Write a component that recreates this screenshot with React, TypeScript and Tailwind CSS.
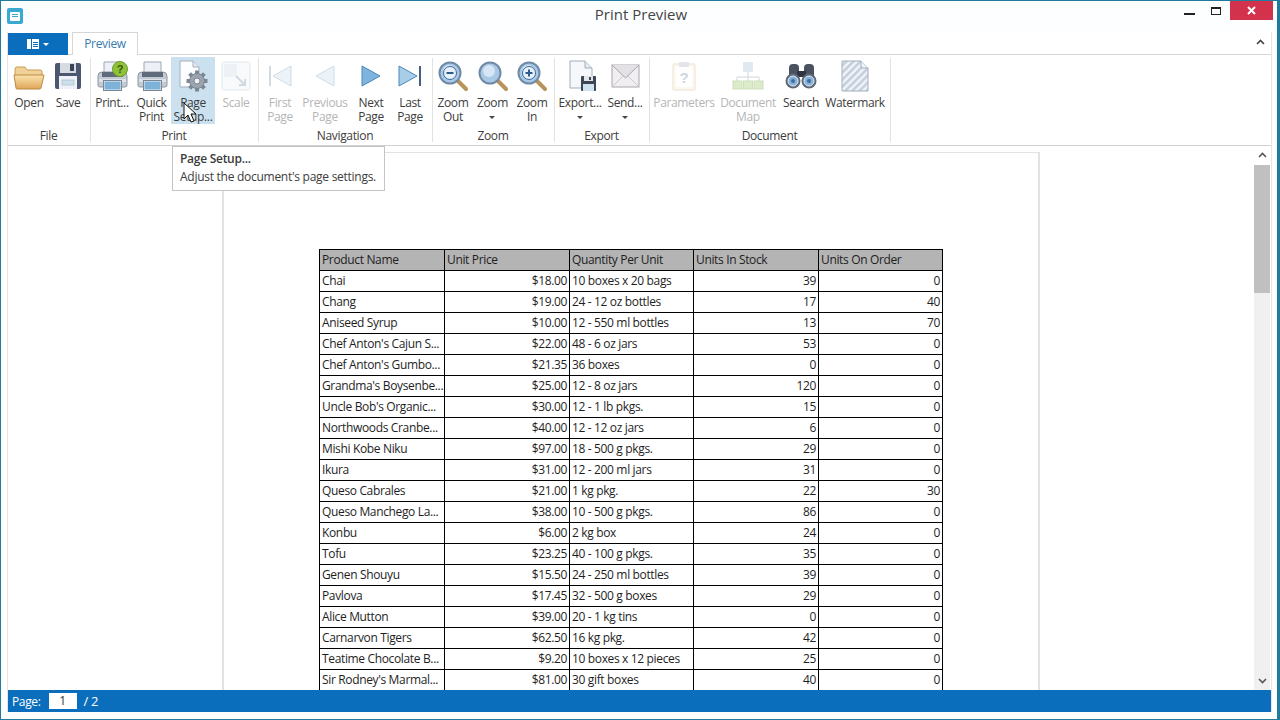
import type { ReactNode } from 'react'

const rows = [
  ['Chai', '$18.00', '10 boxes x 20 bags', '39', '0'],
  ['Chang', '$19.00', '24 - 12 oz bottles', '17', '40'],
  ['Aniseed Syrup', '$10.00', '12 - 550 ml bottles', '13', '70'],
  ["Chef Anton's Cajun S...", '$22.00', '48 - 6 oz jars', '53', '0'],
  ["Chef Anton's Gumbo...", '$21.35', '36 boxes', '0', '0'],
  ["Grandma's Boysenbe...", '$25.00', '12 - 8 oz jars', '120', '0'],
  ["Uncle Bob's Organic...", '$30.00', '12 - 1 lb pkgs.', '15', '0'],
  ['Northwoods Cranbe...', '$40.00', '12 - 12 oz jars', '6', '0'],
  ['Mishi Kobe Niku', '$97.00', '18 - 500 g pkgs.', '29', '0'],
  ['Ikura', '$31.00', '12 - 200 ml jars', '31', '0'],
  ['Queso Cabrales', '$21.00', '1 kg pkg.', '22', '30'],
  ['Queso Manchego La...', '$38.00', '10 - 500 g pkgs.', '86', '0'],
  ['Konbu', '$6.00', '2 kg box', '24', '0'],
  ['Tofu', '$23.25', '40 - 100 g pkgs.', '35', '0'],
  ['Genen Shouyu', '$15.50', '24 - 250 ml bottles', '39', '0'],
  ['Pavlova', '$17.45', '32 - 500 g boxes', '29', '0'],
  ['Alice Mutton', '$39.00', '20 - 1 kg tins', '0', '0'],
  ['Carnarvon Tigers', '$62.50', '16 kg pkg.', '42', '0'],
  ['Teatime Chocolate B...', '$9.20', '10 boxes x 12 pieces', '25', '0'],
  ["Sir Rodney's Marmal...", '$81.00', '30 gift boxes', '40', '0'],
]

function Svg({ children }: { children: ReactNode }) {
  return (
    <svg width="32" height="32" viewBox="0 0 32 32">
      {children}
    </svg>
  )
}

function Printer({ x = 0 }: { x?: number }) {
  return (
    <g transform={`translate(${x} 0)`}>
      <path d="M8 2h17v12H8z" fill="#eef0f7" stroke="#9da5b3" />
      <path d="M2 16q0-4 4-4h21q4 0 4 4v9q0 2-2 2H4q-2 0-2-2z" fill="#c3cad4" stroke="#8f99a6" />
      <rect x="6" y="12" width="21" height="5" fill="#5f6a7a" />
      <rect x="3" y="19" width="27" height="3" fill="#dfe3e9" />
      <rect x="8" y="21" width="17" height="9" fill="#7fb2d9" stroke="#e9f2f8" />
      <rect x="7.5" y="20.5" width="18" height="10" fill="none" stroke="#7d8794" />
    </g>
  )
}

function Magnifier({ sign }: { sign?: 'minus' | 'plus' }) {
  return (
    <>
      <path d="M20 20l9 9" stroke="#b8935a" strokeWidth="4" strokeLinecap="round" />
      <circle cx="13" cy="13" r="10.5" fill="#a9c8e6" stroke="#6f8aa6" strokeWidth="2" />
      <circle cx="12" cy="11" r="6" fill="#d6e6f5" />
      {sign && <circle cx="13" cy="13" r="6.5" fill="#e8f1f9" stroke="#3d6c9e" />}
      {sign && <path d="M9.5 13h7" stroke="#2c5c8e" strokeWidth="2" />}
      {sign === 'plus' && <path d="M13 9.5v7" stroke="#2c5c8e" strokeWidth="2" />}
    </>
  )
}

const teeth = [0, 45, 90, 135, 180, 225, 270, 315]

const icons: Record<string, ReactNode> = {
  open: (
    <Svg>
      <defs>
        <linearGradient id="fold" x1="0" y1="0" x2="0" y2="1">
          <stop offset="0" stopColor="#fbe3ad" />
          <stop offset="1" stopColor="#dfa65a" />
        </linearGradient>
      </defs>
      <path d="M2 9q0-2 2-2h8l2 3h13q2 0 2 2v4H2z" fill="#f0d298" stroke="#c79b55" />
      <path d="M1 15h30l-3 13q0 1-2 1H4q-1 0-1-1z" fill="url(#fold)" stroke="#bd8a3e" />
    </Svg>
  ),
  save: (
    <Svg>
      <rect x="3" y="3" width="26" height="26" rx="2" fill="#4b5870" />
      <rect x="8" y="3" width="16" height="10" fill="#d7dbe2" />
      <rect x="18" y="4" width="4" height="7" fill="#39435a" />
      <rect x="7" y="16" width="18" height="13" fill="#eef1f5" />
      <rect x="10" y="20" width="12" height="5" fill="#cfe0ed" stroke="#9fb3c4" strokeWidth="0.6" />
    </Svg>
  ),
  print: (
    <Svg>
      <Printer />
      <circle cx="24" cy="9" r="7.5" fill="#8fc23a" stroke="#6d9c24" />
      <text x="24" y="13" textAnchor="middle" fontSize="11" fontWeight="700" fill="#35560c" fontFamily="Liberation Sans">?</text>
    </Svg>
  ),
  quick: (
    <Svg>
      <Printer />
    </Svg>
  ),
  setup: (
    <Svg>
      <path d="M3 1h13l6 6v20H3z" fill="#fcfdfe" stroke="#a3aebc" />
      <path d="M16 1v6h6" fill="#e4e9ef" stroke="#a3aebc" />
      <g transform="translate(20 21)">
        {teeth.map((a) => (
          <rect key={a} x="-2" y="-10.5" width="4" height="5" fill="#7d8792" transform={`rotate(${a})`} />
        ))}
        <circle r="7.5" fill="#9ba4af" stroke="#7d8792" />
        <circle r="3" fill="#eef1f5" stroke="#7d8792" />
      </g>
    </Svg>
  ),
  scale: (
    <Svg>
      <rect x="2" y="2" width="28" height="28" rx="2" fill="#f1f4f8" stroke="#b6c1cd" />
      <rect x="4" y="4" width="13" height="13" fill="#d6dee8" />
      <path d="M16 16l9 9m0-6v6h-6" fill="none" stroke="#8ea4ba" strokeWidth="2" />
    </Svg>
  ),
  first: (
    <Svg>
      <rect x="5" y="6" width="2" height="20" fill="#8fa2b5" />
      <path d="M27 6v20L9 16z" fill="#cfe0ee" stroke="#8fa9c0" />
    </Svg>
  ),
  prev: (
    <Svg>
      <path d="M25 6v20L7 16z" fill="#cfe0ee" stroke="#8fa9c0" />
    </Svg>
  ),
  next: (
    <Svg>
      <path d="M7 6v20l18-10z" fill="#7db4e0" stroke="#4a87b8" />
    </Svg>
  ),
  last: (
    <Svg>
      <path d="M5 6v20l18-10z" fill="#a8cde9" stroke="#4a87b8" />
      <rect x="25" y="6" width="2" height="20" fill="#44617f" />
    </Svg>
  ),
  zoomOut: (
    <Svg>
      <Magnifier sign="minus" />
    </Svg>
  ),
  zoom: (
    <Svg>
      <Magnifier />
    </Svg>
  ),
  zoomIn: (
    <Svg>
      <Magnifier sign="plus" />
    </Svg>
  ),
  export: (
    <Svg>
      <path d="M6 1h15l7 7v20H6z" fill="#f5f7fb" stroke="#a3aebc" />
      <path d="M21 1v7h7" fill="#e4e9ef" stroke="#a3aebc" />
      <rect x="17" y="16" width="15" height="15" rx="1" fill="#3e4758" />
      <rect x="20" y="16" width="9" height="5" fill="#e2e5ea" />
      <rect x="25" y="17" width="2" height="3" fill="#3e4758" />
      <rect x="19" y="24" width="11" height="7" fill="#cfe3f1" />
    </Svg>
  ),
  send: (
    <Svg>
      <rect x="3" y="5" width="27" height="22" fill="#f1eef2" stroke="#aaa3ac" />
      <path d="M3 27l11-11M30 27L19 16" stroke="#cfc9d2" fill="none" />
      <path d="M3 5l13.5 13L30 5" fill="#e3e0e6" stroke="#aaa3ac" />
    </Svg>
  ),
  params: (
    <Svg>
      <rect x="5" y="4" width="22" height="26" rx="1" fill="#f8efe0" stroke="#d9b98a" />
      <rect x="8" y="7" width="16" height="20" fill="#fff" />
      <rect x="11" y="2" width="10" height="5" rx="1" fill="#b9c2cc" />
      <text x="16" y="23" textAnchor="middle" fontSize="15" fontWeight="700" fill="#8b98a8" fontFamily="Liberation Sans">?</text>
    </Svg>
  ),
  map: (
    <Svg>
      <rect x="11" y="2" width="10" height="10" rx="1" fill="#b4c6dc" />
      <path d="M16 12v5M5 21v-4h22v4M16 17v4" fill="none" stroke="#8fa0b0" />
      <rect x="1" y="21" width="9" height="8" fill="#a9cf7b" stroke="#86ad57" />
      <rect x="11.5" y="21" width="9" height="8" fill="#a9cf7b" stroke="#86ad57" />
      <rect x="22" y="21" width="9" height="8" fill="#a9cf7b" stroke="#86ad57" />
    </Svg>
  ),
  search: (
    <Svg>
      <rect x="4" y="4" width="10" height="16" rx="4" fill="#4a5260" />
      <rect x="19" y="4" width="10" height="16" rx="4" fill="#4a5260" />
      <rect x="12" y="11" width="9" height="6" fill="#2f3540" />
      <circle cx="8" cy="21" r="7.5" fill="#5d6877" />
      <circle cx="24" cy="21" r="7.5" fill="#5d6877" />
      <circle cx="8" cy="21" r="5" fill="#86b0da" stroke="#e3edf6" />
      <circle cx="24" cy="21" r="5" fill="#86b0da" stroke="#e3edf6" />
      <circle cx="8" cy="21" r="2" fill="#3e6ea3" />
      <circle cx="24" cy="21" r="2" fill="#3e6ea3" />
    </Svg>
  ),
  watermark: (
    <Svg>
      <defs>
        <pattern id="hatch" width="5" height="5" patternUnits="userSpaceOnUse" patternTransform="rotate(-45)">
          <rect width="5" height="5" fill="#f2f4f8" />
          <rect width="5" height="2.5" fill="#c3cddc" />
        </pattern>
      </defs>
      <path d="M3 1h19l7 7v23H3z" fill="url(#hatch)" stroke="#a3aebc" />
      <path d="M22 1v7h7" fill="#eef1f5" stroke="#a3aebc" />
    </Svg>
  ),
}

function Caret({ className = 'border-t-[#444]' }: { className?: string }) {
  return <span className={`block w-0 h-0 border-x-[3px] border-x-transparent border-t-[3px] ${className}`} />
}

function Tool({ icon, label, w, off, hot, caret }: { icon: string; label: string[]; w: string; off?: boolean; hot?: boolean; caret?: boolean }) {
  return (
    <div className={`${w} h-[67px] mt-[2px] pt-[3px] shrink-0 flex flex-col items-center ${hot ? 'bg-[#cbe1ef]' : ''}`}>
      <div className={off ? 'opacity-40' : ''}>{icons[icon]}</div>
      <div className={`mt-[4px] text-center text-[12px] leading-[14px] whitespace-nowrap ${off ? 'text-[#b5b5b5]' : 'text-[#3c3c3c]'}`}>
        {label.map((l) => (
          <div key={l}>{l}</div>
        ))}
        {caret && <div className="h-[14px] flex items-center justify-center"><Caret /></div>}
      </div>
    </div>
  )
}

function Group({ title, w, pl, children }: { title: string; w: string; pl?: string; children: ReactNode }) {
  return (
    <div className={`${w} shrink-0 flex flex-col relative`}>
      <div className={`flex h-[69px] ${pl ?? ''}`}>{children}</div>
      <div className="mt-[5px] pr-[2px] text-center text-[12px] leading-[14px] text-[#3c3c3c]">{title}</div>
      <div className="absolute right-0 top-[3px] bottom-[3px] w-px bg-[#e2e2e2]" />
    </div>
  )
}

function Ribbon() {
  return (
    <div className="h-[91px] shrink-0 flex border-b border-[#d0d0d0] bg-white">
      <Group title="File" w="w-[83px]" pl="pl-[2px]">
        <Tool icon="open" label={['Open']} w="w-[38px]" />
        <Tool icon="save" label={['Save']} w="w-[40px]" />
      </Group>
      <Group title="Print" w="w-[168px]" pl="pl-[1px]">
        <Tool icon="print" label={['Print...']} w="w-[40px]" />
        <Tool icon="quick" label={['Quick', 'Print']} w="w-[39px]" />
        <Tool icon="setup" label={['Page', 'Setup...']} w="w-[44px]" hot />
        <Tool icon="scale" label={['Scale']} w="w-[42px]" off />
      </Group>
      <Group title="Navigation" w="w-[174px]">
        <Tool icon="first" label={['First', 'Page']} w="w-[42px]" off />
        <Tool icon="prev" label={['Previous', 'Page']} w="w-[48px]" off />
        <Tool icon="next" label={['Next', 'Page']} w="w-[44px]" />
        <Tool icon="last" label={['Last', 'Page']} w="w-[34px]" />
      </Group>
      <Group title="Zoom" w="w-[122px]">
        <Tool icon="zoomOut" label={['Zoom', 'Out']} w="w-[40px]" />
        <Tool icon="zoom" label={['Zoom']} w="w-[39px]" caret />
        <Tool icon="zoomIn" label={['Zoom', 'In']} w="w-[40px]" />
      </Group>
      <Group title="Export" w="w-[95px]">
        <Tool icon="export" label={['Export...']} w="w-[50px]" caret />
        <Tool icon="send" label={['Send...']} w="w-[40px]" caret />
      </Group>
      <Group title="Document" w="w-[241px]">
        <Tool icon="params" label={['Parameters']} w="w-[68px]" off />
        <Tool icon="map" label={['Document', 'Map']} w="w-[60px]" off />
        <Tool icon="search" label={['Search']} w="w-[46px]" />
        <Tool icon="watermark" label={['Watermark']} w="w-[62px]" />
      </Group>
    </div>
  )
}

function Report() {
  const cell = 'border border-black h-[21px] p-0 px-[2px] text-[12px] leading-[14px] whitespace-nowrap overflow-hidden'
  return (
    <table className="table-fixed border-collapse w-[624px] text-[#1e1e1e]">
      <colgroup>
        <col className="w-[125px]" />
        <col className="w-[125px]" />
        <col className="w-[124px]" />
        <col className="w-[125px]" />
        <col className="w-[124px]" />
      </colgroup>
      <thead>
        <tr className="bg-[#b4b4b4]">
          {['Product Name', 'Unit Price', 'Quantity Per Unit', 'Units In Stock', 'Units On Order'].map((h) => (
            <th key={h} className={`${cell} font-normal text-left`}>{h}</th>
          ))}
        </tr>
      </thead>
      <tbody>
        {rows.map((r) => (
          <tr key={r[0]}>
            <td className={cell}>{r[0]}</td>
            <td className={`${cell} text-right`}>{r[1]}</td>
            <td className={cell}>{r[2]}</td>
            <td className={`${cell} text-right`}>{r[3]}</td>
            <td className={`${cell} text-right`}>{r[4]}</td>
          </tr>
        ))}
      </tbody>
    </table>
  )
}

export default function App() {
  return (
    <div className='[font-family:"Open_Sans","Noto_Sans",sans-serif] tracking-[-0.35px] w-[1280px] h-[720px] relative overflow-hidden bg-white border-t border-l border-b border-r-[3px] border-[#1f7a9c] flex flex-col'>
      <div className="h-[31px] shrink-0 flex items-center relative bg-[#fdfeff]">
        <div className="ml-[6px] mt-[-1px] w-[16px] h-[16px] rounded-[2px] bg-[#39a9cf] flex items-center justify-center">
          <div className="w-[10px] h-[9px] bg-white rounded-[1px] flex flex-col gap-px p-[2px]">
            <div className="h-px bg-[#39a9cf]" />
            <div className="h-px bg-[#39a9cf]" />
          </div>
        </div>
        <div className="flex-1 text-center text-[15px] tracking-normal text-[#444] pr-[18px] mt-[-4px]">Print Preview</div>
        <div className="absolute left-[1183px] top-[12px] w-[11px] h-[2px] bg-[#222]" />
        <div className="absolute left-[1210px] top-[6px] w-[10px] h-[8px] border border-[#222] border-t-[2px]" />
        <div className="absolute left-[1229px] top-0 w-[43px] h-[19px] bg-[#d3324d] flex items-center justify-center">
          <svg width="9" height="9" viewBox="0 0 9 9">
            <path d="M1 1l7 7M8 1L1 8" stroke="#fff" strokeWidth="2" />
          </svg>
        </div>
      </div>

      <div className="ml-[6px] mr-[5px] flex flex-col flex-1 min-h-0 border-x border-[#e9e4e6]">
        <div className="h-[23px] shrink-0 flex items-end border-y border-y-transparent border-b-[#d6d6d6] relative">
          <div className="w-[60px] h-[22px] bg-[#0a6ebd] flex items-center justify-center gap-[4px] mb-[-1px]">
            <div className="w-[12px] h-[10px] bg-white flex">
              <div className="w-[5px] border-r border-[#0a6ebd]" />
              <div className="flex-1 flex flex-col justify-center gap-px px-px">
                <div className="h-px bg-[#0a6ebd]" />
                <div className="h-px bg-[#0a6ebd]" />
                <div className="h-px bg-[#0a6ebd]" />
              </div>
            </div>
            <Caret className="border-t-white" />
          </div>
          <div className="ml-[4px] w-[66px] h-[23px] mb-[-1px] bg-white border-x border-t border-[#d6d6d6] flex items-center justify-center text-[12px] text-[#3a7bb0]">
            Preview
          </div>
          <svg className="absolute right-[6px] top-[6px]" width="9" height="7" viewBox="0 0 9 7">
            <path d="M1 5l3.5-3.5L8 5" fill="none" stroke="#444" strokeWidth="1.6" />
          </svg>
        </div>

        <Ribbon />

        <div className="flex-1 min-h-0 flex relative">
          <div className="flex-1 min-w-0 overflow-hidden flex justify-center pt-[6px]">
            <div className="w-[818px] h-[1056px] shrink-0 bg-white border-l-2 border-t border-r-2 border-[#e2e2e2] pl-[95px] pt-[96px]">
              <Report />
            </div>
          </div>
          <div className="w-[16px] mr-px flex flex-col bg-[#f0f0f0]">
            <div className="h-[19px] bg-white flex items-center justify-center">
              <svg width="9" height="7" viewBox="0 0 9 7">
                <path d="M1 5l3.5-3.5L8 5" fill="none" stroke="#555" strokeWidth="1.6" />
              </svg>
            </div>
            <div className="h-[128px] bg-[#c0c0c0]" />
            <div className="flex-1" />
            <div className="h-[19px] flex items-center justify-center">
              <svg width="9" height="7" viewBox="0 0 9 7">
                <path d="M1 2l3.5 3.5L8 2" fill="none" stroke="#555" strokeWidth="1.6" />
              </svg>
            </div>
          </div>
        </div>

        <div className="h-[22px] shrink-0 bg-[#0a6ebd] flex items-center text-[12px] text-white pl-[4px]">
          <span className="mt-px">Page:</span>
          <span className="ml-[8px] w-[28px] h-[16px] bg-white text-[#333] text-center leading-[16px]">1</span>
          <span className="ml-[7px] mt-px text-[13px]">/ 2</span>
        </div>
      </div>
      <div className="h-[7px] shrink-0" />

      <div className="absolute left-[171px] top-[145px] w-[213px] h-[45px] bg-white border border-[#c4c4c4] px-[7px] pt-[3px] text-[12px] tracking-[-0.27px] leading-[18px] text-[#3c3c3c]">
        <div className="font-semibold">Page Setup...</div>
        <div>Adjust the document's page settings.</div>
      </div>

      <svg className="absolute left-[182px] top-[101px]" width="14" height="22" viewBox="0 0 14 22">
        <path d="M1 1v16l4-4 3 7 3-1-3-7h5z" fill="#fff" stroke="#111" />
      </svg>
    </div>
  )
}
